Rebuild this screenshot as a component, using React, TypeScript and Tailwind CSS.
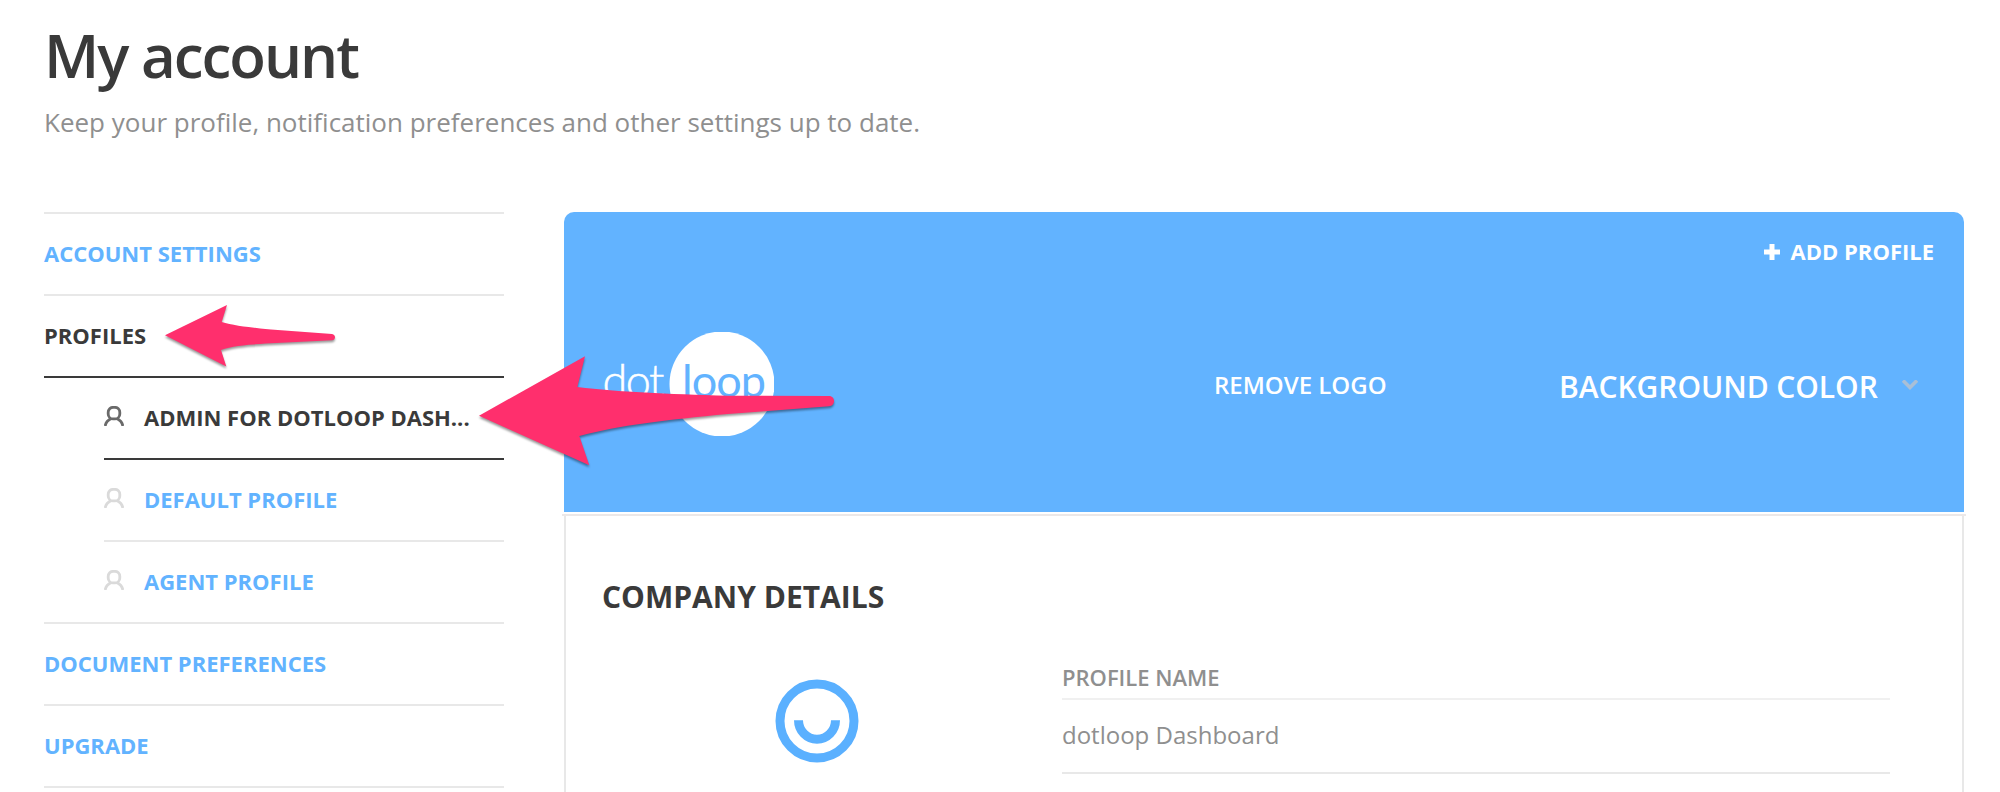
import clsx from "clsx";

type NavItem = {
  label: string;
  active?: boolean;
  nested?: boolean;
  // the last nested row keeps the full width rule
  last?: boolean;
};

const navItems: NavItem[] = [
  { label: "Account settings" },
  { label: "Profiles", active: true },
  { label: "Admin for dotloop Dash...", active: true, nested: true },
  { label: "Default profile", nested: true },
  { label: "Agent profile", nested: true, last: true },
  { label: "Document preferences" },
  { label: "Upgrade" },
];

function PersonIcon({ active }: { active?: boolean }) {
  return (
    <svg
      aria-hidden
      viewBox="0 0 20 20"
      className={clsx(
        "mb-[2px] size-5 shrink-0",
        active ? "text-[#6a6a6a]" : "text-[#dadada]",
      )}
      fill="none"
      stroke="currentColor"
      strokeWidth="2.8"
    >
      <rect x="4.2" y="1.3" width="11.6" height="11.6" rx="5" />
      <path d="M1.200 20c.5-3.600 2.600-5.700 5.600-7.200M18.800 20c-.5-3.600-2.600-5.700-5.600-7.200" />
    </svg>
  );
}

function SideNav() {
  return (
    <nav className="w-[460px] shrink-0 border-t-2 border-[#e8e8e8]">
      {navItems.map((item) => (
        <a
          key={item.label}
          className={clsx(
            "flex h-[82px] items-center border-b-2 pb-[2px] text-[22px] font-bold uppercase",
            item.active
              ? "border-[#3a3a3a] text-[#3a3a3a]"
              : "border-[#e8e8e8] text-[#62b3ff]",
            item.nested && !item.last && "ml-[60px]",
            item.nested && item.last && "pl-[60px]",
          )}
        >
          {item.nested ? <PersonIcon active={item.active} /> : null}
          <span className={clsx("whitespace-nowrap", item.nested && "ml-5")}>
            {item.label}
          </span>
        </a>
      ))}
    </nav>
  );
}

function DotloopLogo() {
  return (
    <svg
      role="img"
      aria-label="dotloop"
      viewBox="0 0 170 104"
      className="h-[104px] w-[170px]"
      fontFamily="Lato, sans-serif"
      fontSize="45"
    >
      <circle cx="118" cy="52" r="52.500" fill="#fff" />
      <text x="-1.500" y="64.500" fill="#fff" stroke="#fff" strokeWidth="0.5" fontWeight="300" textLength="62">
        dot
      </text>
      <text x="78" y="64.500" fill="#62b3ff" fontWeight="400" textLength="84">
        loop
      </text>
    </svg>
  );
}

function ProfileBanner() {
  return (
    <header className="h-[300px] rounded-t-[10px] bg-[#62b3ff] text-white">
      <div className="flex h-[78px] items-center justify-end gap-[11px] pr-[30px] text-[22px] font-bold">
        <svg aria-hidden viewBox="0 0 16 16" className="mt-[2px] size-4" fill="currentColor">
          <path d="M5.500 0h5v5.500H16v5h-5.500V16h-5v-5.500H0v-5h5.500z" />
        </svg>
        ADD PROFILE
      </div>
      <div className="flex items-start pt-[42px] pl-10">
        <DotloopLogo />
        <span className="ml-[440px] w-[345px] pt-[35px] text-[24px] leading-9 font-semibold">
          REMOVE LOGO
        </span>
        <span className="w-[318px] pt-[33px] text-[30px] leading-[44px] font-semibold tracking-[-0.05px] whitespace-nowrap">
          BACKGROUND COLOR
        </span>
        <svg
          aria-hidden
          viewBox="0 0 16 10"
          className="mt-12 ml-[25px] h-[10px] w-4"
          fill="none"
          stroke="#a9bfd6"
          strokeWidth="3.6"
        >
          <path d="M1 0.500l7 7 7-7" />
        </svg>
      </div>
    </header>
  );
}

function SmileAvatar() {
  return (
    <svg
      aria-hidden
      viewBox="0 0 84 84"
      className="size-[84px]"
      fill="none"
      stroke="#5ab0ff"
      strokeWidth="9"
    >
      <circle cx="42" cy="42" r="37" />
      <path d="M23.500 41.200a18.500 19 0 0 0 37 0" />
    </svg>
  );
}

function CompanyDetails() {
  return (
    <section className="mt-0.5 h-[278px]">
      <div className="-mx-1 h-0.5 bg-[#ece8e8]" />
      <div className="h-full px-9 pt-[60px]">
        <h2 className="text-[30px] leading-[42px] font-bold text-[#3a3a3a]">
          COMPANY DETAILS
        </h2>
        <div className="flex pt-[38px]">
          <div className="flex w-[460px] justify-center pt-[23px] pr-[30px]">
            <SmileAvatar />
          </div>
          <dl className="w-[828px] text-[#8f8f8f]">
            <dt className="flex h-[44px] items-center border-b-2 border-[#f0f0f0] text-[22px] font-semibold">
              PROFILE NAME
            </dt>
            <dd className="flex h-[74px] items-center border-b-2 border-[#e8e8e8] pb-[2px] text-[24px]">
              dotloop Dashboard
            </dd>
          </dl>
        </div>
      </div>
    </section>
  );
}

// Callout arrows sit over the page, coordinates are page pixels.
function Arrows() {
  return (
    <svg
      aria-hidden
      viewBox="0 0 2000 792"
      className="pointer-events-none absolute inset-0 h-[792px] w-[2000px] drop-shadow-[0_2px_1px_rgba(0,0,0,0.4)]"
      fill="#ff2f6d"
    >
      <path d="M165 335.300L227 305L221.700 322C233 325.500 250 327.500 271 329.500L332 334C336 334.500 336 340 332 340.300L271 343.300C250 344.500 233 345.500 221 350L226.300 366.500Z" />
      <path d="M479 415.700L585 356.300L577.300 387C620 392 665 394 728 395.700L829 396C835.500 396 836 405.500 829 406.300L728 414C665 420 620 425 579.300 436L589.300 465.300Z" />
    </svg>
  );
}

export default function App() {
  return (
    <div className="relative h-[792px] w-[2000px] overflow-hidden bg-white font-['Open_Sans',sans-serif]">
      <div className="h-[212px] pl-11">
        <h1 className="pt-[15px] text-[60px] leading-[80px] font-semibold tracking-[-2px] text-[#3a3a3a]">
          My account
        </h1>
        <p className="pt-[9px] text-[26px] leading-9 text-[#8f8f8f]">
          Keep your profile, notification preferences and other settings up to
          date.
        </p>
      </div>
      <div className="flex pl-11">
        <SideNav />
        <main className="ml-[60px] w-[1400px]">
          <ProfileBanner />
          <div className="border-x-2 border-[#e8e8e8]">
            <CompanyDetails />
          </div>
        </main>
      </div>
      <Arrows />
    </div>
  );
}
